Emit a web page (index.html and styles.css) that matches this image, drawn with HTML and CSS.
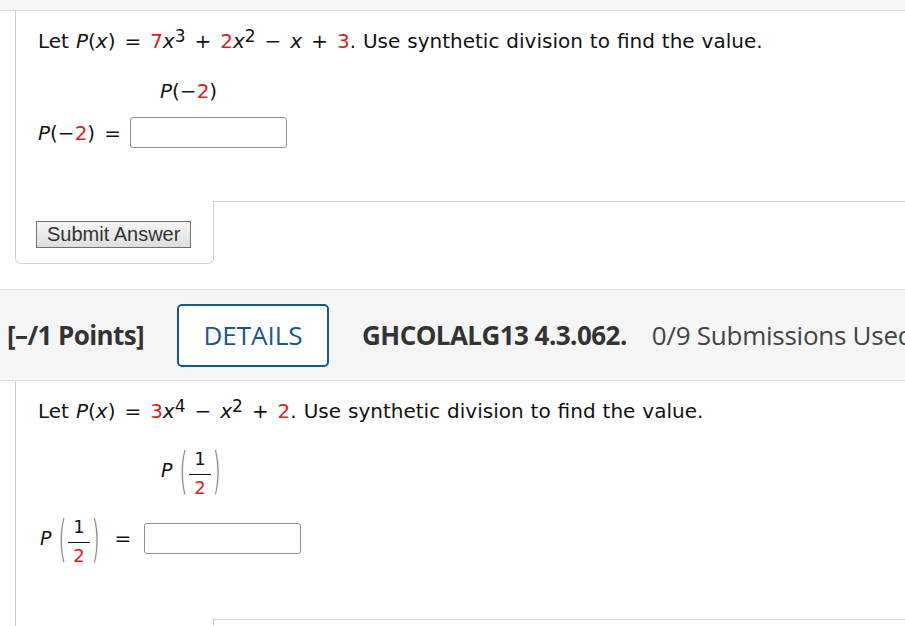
FILE: index.html
```html
<!DOCTYPE html>
<html lang="en">
<head>
  <meta charset="UTF-8">
  <title>Synthetic Division Questions</title>
  <link rel="stylesheet" href="styles.css">
</head>
<body>

  <div class="band band-end"></div>

  <section class="question">
    <div class="q-body">
      <p class="prompt">Let <i>P</i>(<i>x</i>) <span class="op">=</span> <span class="red">7</span><i>x</i><sup>3</sup> <span class="op">+</span> <span class="red">2</span><i>x</i><sup>2</sup> <span class="op">&minus;</span> <i>x</i> <span class="op">+</span> <span class="red">3</span>. Use synthetic division to find the value.</p>
      <p class="display"><i>P</i>(&minus;<span class="red">2</span>)</p>
      <div class="answer-row">
        <span class="label"><i>P</i>(&minus;<span class="red">2</span>)</span>
        <span class="eq">=</span>
        <input type="text" class="answer">
      </div>
    </div>
    <div class="q-foot">
      <div class="submit-cell">
        <button class="submit">Submit Answer</button>
      </div>
      <div class="foot-fill"></div>
    </div>
  </section>

  <div class="band">
    <span class="points">[&ndash;/1 Points]</span>
    <button class="details">DETAILS</button>
    <span class="code">GHCOLALG13 4.3.062.</span>
    <span class="subs">0/9 Submissions Used</span>
  </div>

  <section class="question">
    <div class="q-body q-body-tall">
      <p class="prompt">Let <i>P</i>(<i>x</i>) <span class="op">=</span> <span class="red">3</span><i>x</i><sup>4</sup> <span class="op">&minus;</span> <i>x</i><sup>2</sup> <span class="op">+</span> <span class="red">2</span>. Use synthetic division to find the value.</p>
      <div class="display display-frac">
        <span class="fn"><i class="fn-p">P</i><span class="paren">(</span><span class="frac"><span class="num">1</span><span class="den red">2</span></span><span class="paren">)</span></span>
      </div>
      <div class="answer-row answer-row-frac">
        <span class="fn"><i class="fn-p">P</i><span class="paren">(</span><span class="frac"><span class="num">1</span><span class="den red">2</span></span><span class="paren">)</span></span>
        <span class="eq">=</span>
        <input type="text" class="answer">
      </div>
    </div>
    <div class="q-foot">
      <div class="submit-cell"></div>
      <div class="foot-fill"></div>
    </div>
  </section>

</body>
</html>
```

FILE: styles.css
```css
body {
  margin: 0;
  font-family: "DejaVu Sans", Verdana, sans-serif;
  font-size: 20px;
  color: #111;
  background-color: #fff;
  overflow: hidden;
}
p {
  margin: 0;
}
.red {
  color: #e01b1b;
}
.prompt {
  line-height: 28px;
  word-spacing: 0.6px;
}
.op {
  margin: 0 2px;
}
sup {
  font-size: 17px;
  line-height: 0;
  vertical-align: 6px;
}

/* gray header bands */
.band {
  display: flex;
  align-items: center;
  height: 90px;
  margin-top: 25px;
  padding-left: 7px;
  background-color: #f5f5f5;
  border-top: 1px solid #dcdcdc;
  border-bottom: 1px solid #dcdcdc;
  font-family: "Open Sans", sans-serif;
  font-size: 26px;
  color: #333;
  white-space: nowrap;
  overflow: hidden;
}
.band-end {
  height: 10px;
  margin-top: 0;
  border-top: none;
}
.band > * {
  flex-shrink: 0;
}
.points {
  font-weight: 700;
  letter-spacing: -0.6px;
}
.details {
  margin-left: 33px;
  width: 152px;
  height: 63px;
  padding: 0;
  background-color: #fff;
  border: 2px solid #14598a;
  border-radius: 5px;
  font-family: inherit;
  font-size: 26px;
  color: #14598a;
}
.code {
  margin-left: 33px;
  font-weight: 700;
  letter-spacing: -0.55px;
}
.subs {
  margin-left: 25px;
  color: #444;
  letter-spacing: -0.25px;
}

/* question blocks */
.question {
  margin-left: 15px;
}
.q-body {
  border-left: 1px solid #cfcfcf;
  padding: 16px 0 0 22px;
  height: 174px;
}
.q-body-tall {
  height: 222px;
}
.display {
  margin-top: 24px;
  padding-left: 122px;
  line-height: 24px;
}
.answer-row {
  display: flex;
  align-items: center;
  gap: 9px;
  margin-top: 14px;
}
.answer {
  width: 157px;
  height: 31px;
  box-sizing: border-box;
  border: 1px solid #8f8f8f;
  border-radius: 3px;
  margin: 0;
}

/* P(1/2) */
.fn {
  display: inline-flex;
  align-items: center;
  height: 50px;
}
.fn-p {
  font-size: 19px;
  margin-right: 5px;
}
.paren {
  display: inline-block;
  margin: 0 2px;
  font-size: 20px;
  line-height: 20px;
  font-weight: 200;
  color: #666;
  transform: scaleY(2.5);
}
.frac {
  display: inline-flex;
  flex-direction: column;
  align-items: stretch;
  text-align: center;
  font-size: 18px;
  line-height: 18px;
  margin-top: 6px;
}
.num {
  border-bottom: 1px solid #111;
  padding: 0 5px 6px;
}
.den {
  padding-top: 4px;
}
.display-frac {
  display: flex;
  margin-top: 20px;
  padding-left: 123px;
}
.answer-row-frac {
  margin-top: 18px;
  gap: 13px;
}
.answer-row-frac .fn {
  margin-left: 2px;
}

/* submit area with its notch */
.q-foot {
  display: flex;
  height: 63px;
}
.submit-cell {
  width: 199px;
  border-left: 1px solid #cfcfcf;
  border-right: 1px solid #cfcfcf;
  border-bottom: 1px solid #cfcfcf;
  border-radius: 0 0 6px 6px;
  padding: 20px 0 0 20px;
  box-sizing: border-box;
}
.foot-fill {
  flex: 1;
  border-top: 1px solid #cfcfcf;
}
.submit {
  height: 27px;
  padding: 0 10px;
  font-family: "Liberation Sans", Arial, sans-serif;
  font-size: 20px;
  color: #333;
  background: linear-gradient(#f4f4f4, #dedede);
  border: 1px solid #707070;
  border-radius: 0;
}
```
